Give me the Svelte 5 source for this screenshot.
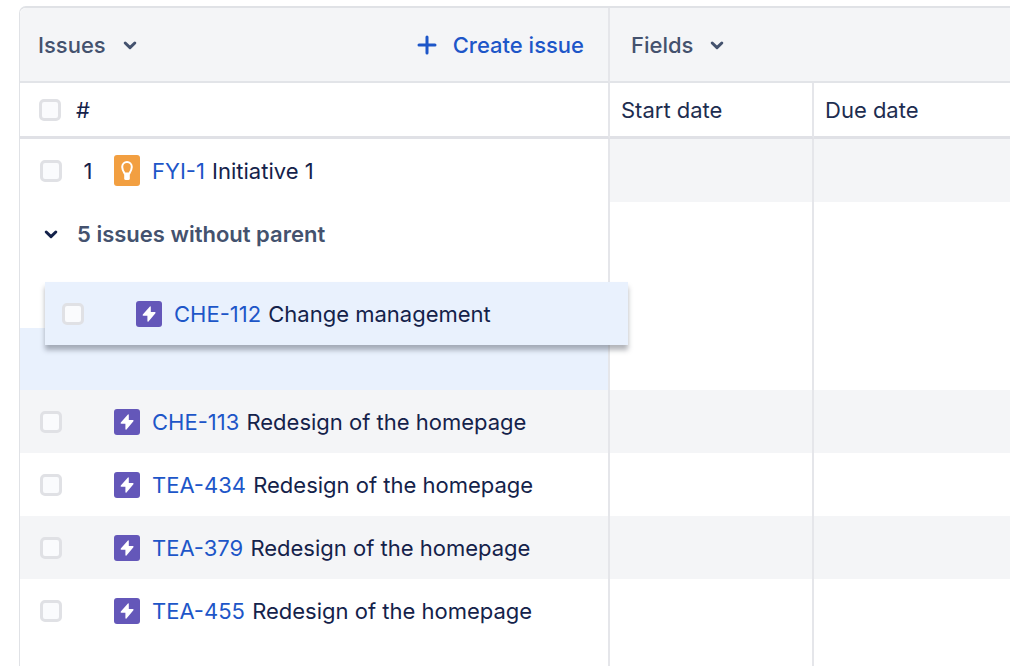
<script>
  const issues = [
    { key: 'CHE-113', title: 'Redesign of the homepage' },
    { key: 'TEA-434', title: 'Redesign of the homepage' },
    { key: 'TEA-379', title: 'Redesign of the homepage' },
    { key: 'TEA-455', title: 'Redesign of the homepage' },
  ];
</script>

{#snippet chevron()}
  <svg class="chevron" viewBox="0 0 14 10" width="14" height="10" aria-hidden="true">
    <path d="M2.200 3 7 7.600l4.800-4.600" />
  </svg>
{/snippet}

{#snippet issue(key, title, type, number)}
  <div class="issue">
    <input type="checkbox" aria-label={key} />
    <span class="number">{number}</span>
    {#if type === 'initiative'}
      <svg class="type" viewBox="0 0 26 31" width="26" height="31" aria-hidden="true">
        <rect width="26" height="31" rx="3" fill="#f29f41" />
        <path d="M10.700 18.600C8.900 15.800 8.200 13.600 8.200 11.900a4.800 4.900 0 0 1 9.600 0c0 1.700-.7 3.900-2.500 6.700z" fill="none" stroke="#fff" stroke-width="2" />
        <path d="M10.200 18.600h5.600v4.800q0 1.600-1.600 1.600h-2.400q-1.600 0-1.600-1.600z" fill="#fff" />
      </svg>
    {:else}
      <svg class="type" viewBox="0 0 26 26" width="26" height="26" aria-hidden="true">
        <rect width="26" height="26" rx="3" fill="#6457b9" />
        <path d="M13.900 5.400 6.800 13.500q-.7 1.200.7 1.300h3.900v5.300q.2 1 1.100.3l6.900-8.100q.6-1.200-.6-1.300h-4V5.800q-.2-.9-.9-.4z" fill="#fff" />
      </svg>
    {/if}
    <span class="summary"><a href="#{key}">{key}</a> {title}</span>
  </div>
{/snippet}

<main>
  <table>
    <colgroup>
      <col class="col-issues" />
      <col class="col-start" />
      <col />
    </colgroup>
    <thead>
      <tr class="toolbar">
        <th>
          <div class="tools">
            <button class="menu">Issues {@render chevron()}</button>
            <button class="create">
              <svg viewBox="0 0 20 20" width="20" height="20" aria-hidden="true">
                <path d="M10 2v16M2 10h16" />
              </svg>
              Create issue
            </button>
          </div>
        </th>
        <th colspan="2">
          <div class="tools fields">
            <button class="menu">Fields {@render chevron()}</button>
          </div>
        </th>
      </tr>
      <tr class="headings">
        <th>
          <label class="select-all"><input type="checkbox" /> #</label>
        </th>
        <th class="date">Start date</th>
        <th class="date">Due date</th>
      </tr>
    </thead>
    <tbody>
      <tr>
        <td>{@render issue('FYI-1', 'Initiative 1', 'initiative', 1)}</td>
        <td class="shade"></td>
        <td class="shade"></td>
      </tr>
      <tr>
        <td><button class="group">{@render chevron()} 5 issues without parent</button></td>
        <td></td>
        <td></td>
      </tr>
      <tr><td></td><td></td><td></td></tr>
      <tr class="drop"><td></td><td></td><td></td></tr>
      {#each issues as item, i}
        <tr class:striped={i % 2 === 0}>
          <td>{@render issue(item.key, item.title, 'epic', '')}</td>
          <td></td>
          <td></td>
        </tr>
      {/each}
      <tr class="rest"><td></td><td></td><td></td></tr>
    </tbody>
  </table>
  <div class="dragged">{@render issue('CHE-112', 'Change management', 'epic', '')}</div>
</main>

<style>
  :global(body) {
    background: #fff;
  }
  main {
    box-sizing: border-box;
    position: relative;
    min-height: calc(100vh - 6px);
    margin: 6px 0 0 19px;
    border: solid #e0e2e6;
    border-width: 2px 0 0 1px;
    border-radius: 7px 0 0 0;
    color: #14224a;
    font: 400 22px/28px Inter, "Liberation Sans", sans-serif;
  }
  table {
    width: 100%;
    height: calc(100vh - 8px);
    table-layout: fixed;
    border-spacing: 0;
  }
  .col-issues {
    width: 590px;
  }
  .col-start {
    width: 204px;
  }
  th,
  td {
    box-sizing: border-box;
    height: 63px;
    padding: 0;
    border-right: 2px solid #e5e6ea;
    text-align: left;
    font-weight: 400;
  }
  th:last-child,
  td:last-child {
    border-right: 0;
  }
  .toolbar th {
    height: 75px;
    background: #f4f5f7;
    border-bottom: 2px solid #e2e4e8;
  }
  .toolbar th:first-child {
    border-top-left-radius: 6px;
  }
  .headings th {
    height: 56px;
    border-bottom: 3px solid #e0e1e6;
  }
  .headings .date {
    padding-left: 11px;
    color: #1d2d50;
  }
  .shade,
  .striped td {
    background: #f4f5f7;
  }
  .drop td {
    height: 62px;
  }
  .drop td:first-child {
    background: #e9f1fd;
  }
  .rest td {
    height: auto;
  }
  button {
    display: flex;
    align-items: center;
    padding: 0;
    border: 0;
    background: none;
    color: #44526e;
    font: inherit;
    font-weight: 500;
    cursor: pointer;
  }
  .tools {
    display: flex;
    align-items: center;
    justify-content: space-between;
    padding: 0 24px 0 18px;
  }
  .fields {
    padding-left: 21px;
  }
  .menu {
    gap: 17px;
  }
  .create {
    gap: 16px;
    color: #1d56c8;
  }
  .create path {
    fill: none;
    stroke: currentColor;
    stroke-width: 3;
    stroke-linecap: round;
  }
  .chevron path {
    fill: none;
    stroke: currentColor;
    stroke-width: 3;
    stroke-linecap: round;
    stroke-linejoin: round;
  }
  .group {
    gap: 19px;
    padding-left: 24px;
    font-weight: 600;
  }
  .group .chevron {
    color: #14224a;
  }
  input {
    appearance: none;
    box-sizing: border-box;
    flex: none;
    width: 22px;
    height: 22px;
    margin: 0;
    border: 3px solid #e0e1e5;
    border-radius: 5px;
    background: #fafbfd;
  }
  input:checked {
    background: #1d56c8;
  }
  .select-all {
    display: flex;
    align-items: center;
    gap: 15px;
    padding-left: 19px;
  }
  .issue {
    display: flex;
    align-items: center;
    padding-left: 20px;
  }
  .number {
    flex: none;
    width: 52px;
    text-align: center;
  }
  .type {
    flex: none;
    margin-right: 12px;
  }
  .summary {
    white-space: nowrap;
  }
  a {
    margin-right: 1px;
    color: #1d56c8;
    text-decoration: none;
  }
  .dragged {
    box-sizing: border-box;
    position: absolute;
    top: 274px;
    left: 25px;
    display: flex;
    align-items: center;
    width: 583px;
    height: 63px;
    background: #e9f1fd;
    box-shadow: 0 5px 5px rgba(30, 35, 50, 0.34);
  }
  .dragged .issue {
    padding-left: 17px;
  }
</style>
